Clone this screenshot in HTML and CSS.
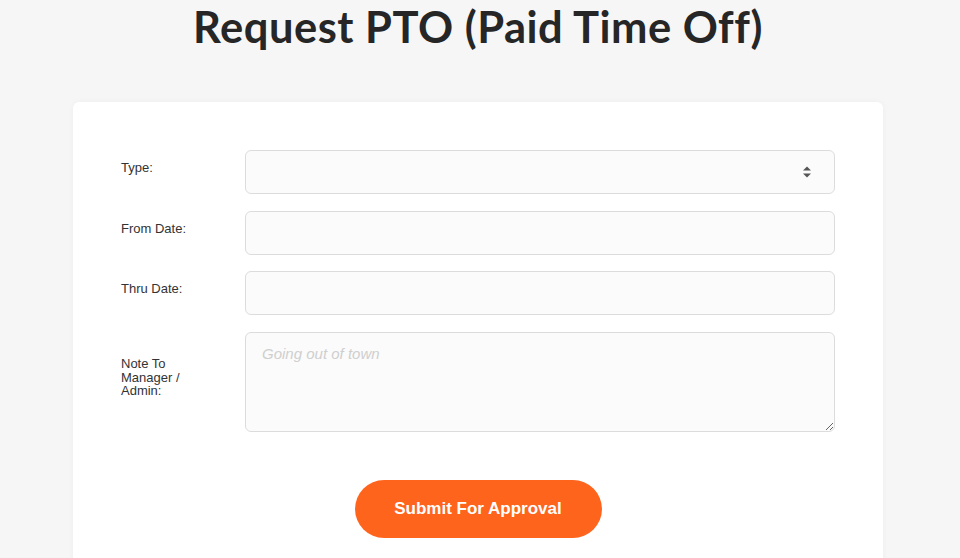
FILE: index.html
```html
<!DOCTYPE html>
<html lang="en">
<head>
    <meta charset="UTF-8">
    <meta name="viewport" content="width=device-width, initial-scale=1.0">
    <title>Request PTO</title>
    <link rel="stylesheet" href="styles.css">
</head>
<body>
    <h1 class="title">Request PTO (Paid Time Off)</h1>

    <div class="card">
        <form class="pto-form">
            <div class="row">
                <label class="label">Type:</label>
                <div class="select-wrap">
                    <select class="field"></select>
                    <svg class="arrows" width="10" height="14" viewBox="0 0 10 14">
                        <path d="M1 5.5 L5 1.5 L9 5.5 Z M1 8.5 L5 12.5 L9 8.5 Z" fill="#555"/>
                    </svg>
                </div>
            </div>
            <div class="row">
                <label class="label">From Date:</label>
                <input class="field" type="text">
            </div>
            <div class="row">
                <label class="label">Thru Date:</label>
                <input class="field" type="text">
            </div>
            <div class="row">
                <label class="label">Note To Manager / Admin:</label>
                <textarea class="field note" placeholder="Going out of town"></textarea>
            </div>
            <div class="actions">
                <button type="button" class="submit">Submit For Approval</button>
            </div>
        </form>
    </div>
</body>
</html>
```

FILE: styles.css
```css
body {
    margin: 0;
    padding: 0;
    background-color: #f6f6f6;
    font-family: Lato, "Open Sans", Arial, sans-serif;
    color: #222;
}

.title {
    margin: 0;
    padding-top: 3px;
    padding-right: 4px;
    text-align: center;
    font-size: 43.5px;
    font-weight: 700;
    line-height: 46px;
    color: #262626;
    letter-spacing: 0.5px;
}

.card {
    width: 810px;
    margin: 53px 0 0 73px;
    background-color: #fff;
    border-radius: 6px;
    box-shadow: 0 0 6px rgba(0, 0, 0, 0.04);
    padding: 48px 48px 40px;
    box-sizing: border-box;
}

.pto-form {
    display: flex;
    flex-direction: column;
    gap: 16.5px;
}

.row {
    display: flex;
    align-items: center;
}

.label {
    width: 124px;
    padding-right: 50px;
    padding-bottom: 8px;
    box-sizing: border-box;
    font-family: "Liberation Sans", Arial, sans-serif;
    font-size: 13px;
    line-height: 13.5px;
    color: #333;
}

.field {
    width: 590px;
    height: 44px;
    box-sizing: border-box;
    border: 1px solid #dcdcdc;
    border-radius: 6px;
    background-color: #fbfbfb;
    padding: 0 16px;
    font-family: "Liberation Sans", Arial, sans-serif;
    font-size: 15px;
    outline: none;
}

.select-wrap {
    position: relative;
    display: flex;
}

.select-wrap select {
    appearance: none;
    -webkit-appearance: none;
}

.arrows {
    position: absolute;
    right: 23px;
    top: 15px;
    pointer-events: none;
}

.note {
    height: 100px;
    padding: 12px 16px;
    resize: vertical;
}

.note::placeholder {
    color: #cfcfcf;
    font-style: italic;
}

.actions {
    display: flex;
    justify-content: center;
    margin-top: 32px;
}

.submit {
    width: 247px;
    height: 58px;
    border: none;
    border-radius: 29px;
    background-color: #ff641d;
    color: #fff;
    font-family: "Liberation Sans", Arial, sans-serif;
    font-size: 17px;
    font-weight: 700;
    cursor: pointer;
}
```
